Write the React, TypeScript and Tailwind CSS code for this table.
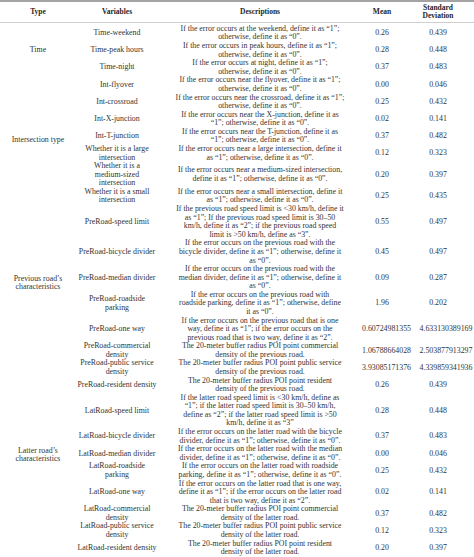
type Row = {
  type?: string[]
  span?: number
  lift?: string
  v: string[]
  d: string[]
  m: string
  s: string
  wide?: boolean
}

const rows: Row[] = [
  {
    type: ['Time'],
    span: 3,
    v: ['Time-weekend'],
    d: ['If the error occurs at the weekend, define it as “1”;', 'otherwise, define it as “0”.'],
    m: '0.26',
    s: '0.439',
  },
  {
    v: ['Time-peak hours'],
    d: ['If the error occurs in peak hours, define it as “1”;', 'otherwise, define it as “0”.'],
    m: '0.28',
    s: '0.448',
  },
  {
    v: ['Time-night'],
    d: ['If the error occurs at night, define it as “1”;', 'otherwise, define it as “0”.'],
    m: '0.37',
    s: '0.483',
  },
  {
    type: ['Intersection type'],
    span: 7,
    v: ['Int-flyover'],
    d: ['If the error occurs near the flyover, define it as “1”;', 'otherwise, define it as “0”.'],
    m: '0.00',
    s: '0.046',
  },
  {
    v: ['Int-crossroad'],
    d: ['If the error occurs near the crossroad, define it as “1”;', 'otherwise, define it as “0”.'],
    m: '0.25',
    s: '0.432',
  },
  {
    v: ['Int-X-junction'],
    d: ['If the error occurs near the X-junction, define it as', '“1”; otherwise, define it as “0”.'],
    m: '0.02',
    s: '0.141',
  },
  {
    v: ['Int-T-junction'],
    d: ['If the error occurs near the T-junction, define it as', '“1”; otherwise, define it as “0”.'],
    m: '0.37',
    s: '0.482',
  },
  {
    v: ['Whether it is a large', 'intersection'],
    d: ['If the error occurs near a large intersection, define it', 'as “1”; otherwise, define it as “0”.'],
    m: '0.12',
    s: '0.323',
  },
  {
    v: ['Whether it is a', 'medium-sized', 'intersection'],
    d: ['If the error occurs near a medium-sized intersection,', 'define it as “1”; otherwise, define it as “0”.'],
    m: '0.20',
    s: '0.397',
  },
  {
    v: ['Whether it is a small', 'intersection'],
    d: ['If the error occurs near a small intersection, define it', 'as “1”; otherwise, define it as “0”.'],
    m: '0.25',
    s: '0.435',
  },
  {
    type: ['Previous road’s', 'characteristics'],
    span: 8,
    lift: 'pb-[32px]',
    v: ['PreRoad-speed limit'],
    d: [
      'If the previous road speed limit is <30 km/h, define it',
      'as “1”; If the previous road speed limit is 30–50',
      'km/h, define it as “2”; if the previous road speed',
      'limit is >50 km/h, define as “3”.',
    ],
    m: '0.55',
    s: '0.497',
  },
  {
    v: ['PreRoad-bicycle divider'],
    d: [
      'If the error occurs on the previous road with the',
      'bicycle divider, define it as “1”; otherwise, define it',
      'as “0”.',
    ],
    m: '0.45',
    s: '0.497',
  },
  {
    v: ['PreRoad-median divider'],
    d: [
      'If the error occurs on the previous road with the',
      'median divider, define it as “1”; otherwise, define it',
      'as “0”.',
    ],
    m: '0.09',
    s: '0.287',
  },
  {
    v: ['PreRoad-roadside', 'parking'],
    d: [
      'If the error occurs on the previous road with',
      'roadside parking, define it as “1”; otherwise, define',
      'it as “0”.',
    ],
    m: '1.96',
    s: '0.202',
  },
  {
    v: ['PreRoad-one way'],
    d: [
      'If the error occurs on the previous road that is one',
      'way, define it as “1”; if the error occurs on the',
      'previous road that is two way, define it as “2”.',
    ],
    m: '0.60724981355',
    s: '4.633130389169',
    wide: true,
  },
  {
    v: ['PreRoad-commercial', 'density'],
    d: ['The 20-meter buffer radius POI point commercial', 'density of the previous road.'],
    m: '1.06788664028',
    s: '2.503877913297',
    wide: true,
  },
  {
    v: ['PreRoad-public service', 'density'],
    d: ['The 20-meter buffer radius POI point public service', 'density of the previous road.'],
    m: '3.93085171376',
    s: '4.339859341936',
    wide: true,
  },
  {
    v: ['PreRoad-resident density'],
    d: ['The 20-meter buffer radius POI point resident', 'density of the previous road.'],
    m: '0.26',
    s: '0.439',
  },
  {
    type: ['Latter road’s', 'characteristics'],
    span: 8,
    lift: 'pb-[40px]',
    v: ['LatRoad-speed limit'],
    d: [
      'If the latter road speed limit is <30 km/h, define as',
      '“1”; if the latter road speed limit is 30–50 km/h,',
      'define as “2”; if the latter road speed limit is >50',
      'km/h, define it as “3”',
    ],
    m: '0.28',
    s: '0.448',
  },
  {
    v: ['LatRoad-bicycle divider'],
    d: [
      'If the error occurs on the latter road with the bicycle',
      'divider, define it as “1”; otherwise, define it as “0”.',
    ],
    m: '0.37',
    s: '0.483',
  },
  {
    v: ['LatRoad-median divider'],
    d: [
      'If the error occurs on the latter road with the median',
      'divider, define it as “1”; otherwise, define it as “0”.',
    ],
    m: '0.00',
    s: '0.046',
  },
  {
    v: ['LatRoad-roadside', 'parking'],
    d: [
      'If the error occurs on the latter road with roadside',
      'parking, define it as “1”; otherwise, define it as “0”.',
    ],
    m: '0.25',
    s: '0.432',
  },
  {
    v: ['LatRoad-one way'],
    d: [
      'If the error occurs on the latter road that is one way,',
      'define it as “1”; if the error occurs on the latter road',
      'that is two way, define it as “2”.',
    ],
    m: '0.02',
    s: '0.141',
  },
  {
    v: ['LatRoad-commercial', 'density'],
    d: ['The 20-meter buffer radius POI point commercial', 'density of the latter road.'],
    m: '0.37',
    s: '0.482',
  },
  {
    v: ['LatRoad-public service', 'density'],
    d: ['The 20-meter buffer radius POI point public service', 'density of the latter road.'],
    m: '0.12',
    s: '0.323',
  },
  {
    v: ['LatRoad-resident density'],
    d: ['The 20-meter buffer radius POI point resident', 'density of the latter road.'],
    m: '0.20',
    s: '0.397',
  },
]

const Lines = ({ l }: { l: string[] }) => (
  <>
    {l.map((t, i) => (
      <span key={i} className="block whitespace-nowrap">
        {t}
      </span>
    ))}
  </>
)

export default function App() {
  return (
    <div className="w-[474px] bg-white font-['Liberation_Serif',serif] text-[7.85px] text-[#333333]">
      <div className="h-[2.3px] bg-[#a3a3a3]" />
      <table className="w-full table-fixed border-collapse">
        <colgroup>
          <col className="w-[76px]" />
          <col className="w-[82px]" />
          <col className="w-[204px]" />
          <col className="w-[40px]" />
          <col className="w-[72px]" />
        </colgroup>
        <thead>
          <tr className="border-b border-[#cfcfcf] text-center text-[7.5px] font-bold leading-[8px] text-[#262626]">
            <th className="py-[1.8px] font-bold">Type</th>
            <th className="py-[1.8px] font-bold">Variables</th>
            <th className="py-[1.8px] font-bold">Descriptions</th>
            <th className="py-[1.8px] font-bold">Mean</th>
            <th className="py-[1.8px] font-bold">
              <Lines l={['Standard', 'Deviation']} />
            </th>
          </tr>
        </thead>
        <tbody className="text-center leading-[8.58px]">
          {rows.map((r, i) => {
            const first = i === 0 ? 'pt-[2px]' : ''
            return (
              <tr key={i}>
                {r.type && (
                  <td rowSpan={r.span} className={`align-middle ${first} ${r.lift ?? ''}`}>
                    <Lines l={r.type} />
                  </td>
                )}
                <td className={`align-middle ${first}`}>
                  <Lines l={r.v} />
                </td>
                <td className={`align-middle ${first}`}>
                  <Lines l={r.d} />
                </td>
                <td className={`align-middle whitespace-nowrap ${first}`}>{r.m}</td>
                <td className={`align-middle whitespace-nowrap ${first} ${r.wide ? 'pl-[16px]' : ''}`}>
                  {r.s}
                </td>
              </tr>
            )
          })}
        </tbody>
      </table>
    </div>
  )
}
